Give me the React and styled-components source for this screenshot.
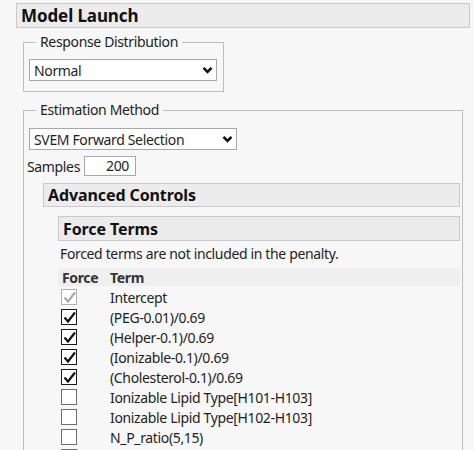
import React from "react";
import styled, { createGlobalStyle } from "styled-components";

const GlobalStyle = createGlobalStyle`
  html, body {
    margin: 0;
    padding: 0;
    background: #f7f7f7;
  }
  body {
    font-family: "Noto Sans", "Open Sans", sans-serif;
    color: #1e1e1e;
    font-size: 14px;
    letter-spacing: -0.35px;
  }
`;

const Page = styled.div`
  padding: 3px 4px 0 16px;
  height: 450px;
  overflow: hidden;
  box-sizing: border-box;
`;

const Outline = styled.div`
  height: ${(p) => p.h}px;
  box-sizing: border-box;
  border: 1px solid #c9c9c9;
  background: #ececec;
  display: flex;
  align-items: center;
  padding-left: 4px;
  font-weight: 700;
  font-size: ${(p) => p.size}px;
  letter-spacing: -0.1px;
  color: #111;
  margin: ${(p) => p.m || "0"};
`;

const Body = styled.div`
  padding-left: 7px;
`;

const Group = styled.fieldset`
  margin: ${(p) => p.m};
  width: ${(p) => p.w}px;
  box-sizing: border-box;
  border: 1px solid #bdbdbd;
  padding: ${(p) => p.pad};
  min-width: 0;
`;

const Legend = styled.legend`
  padding: 0 4px;
  margin-left: 7px;
  font-size: 14px;
  line-height: 18px;
  color: #222;
`;

const Select = styled.div`
  width: ${(p) => p.w}px;
  height: 22px;
  box-sizing: border-box;
  border: 1px solid #a8a8a8;
  background: #fff;
  display: flex;
  align-items: center;
  justify-content: space-between;
  padding: 0 3px 0 4px;
  font-size: 14px;
`;

const Chevron = () => (
  <svg width="11" height="8" viewBox="0 0 11 8">
    <path d="M1.5 1.8 L5.5 5.8 L9.5 1.8" fill="none" stroke="#111" strokeWidth="2.6" />
  </svg>
);

const SampleRow = styled.div`
  display: flex;
  align-items: center;
  gap: 4px;
  margin: 6px 0 0 -2px;
`;

const NumInput = styled.div`
  width: 52px;
  height: 20px;
  box-sizing: border-box;
  border: 1px solid #a8a8a8;
  background: #fff;
  text-align: right;
  padding-right: 6px;
  line-height: 18px;
`;

const Indent = styled.div`
  padding-left: ${(p) => p.l}px;
`;

const Note = styled.div`
  padding: 3px 0 0 2px;
  line-height: 20px;
`;

const Table = styled.div`
  margin-top: 4px;
`;

const HeadRow = styled.div`
  display: flex;
  height: 18px;
  align-items: center;
  background: #efefef;
  font-weight: 700;
  font-size: 14px;
  color: #333;
  margin-bottom: 1px;
`;

const Row = styled.div`
  display: flex;
  height: 20px;
  align-items: center;
`;

const ForceCell = styled.div`
  width: 52px;
  padding-left: ${(p) => (p.head ? 4 : 3)}px;
  box-sizing: border-box;
`;

const Box = styled.div`
  width: 16px;
  height: 16px;
  box-sizing: border-box;
  border: 1.6px solid ${(p) => (p.disabled ? "#b0b0b0" : p.checked ? "#1a1a1a" : "#6e6e6e")};
  background: #fff;
  display: flex;
  align-items: center;
  justify-content: center;
`;

const Check = ({ color }) => (
  <svg width="13" height="13" viewBox="0 0 13 13">
    <path d="M1.5 6.5 L5 10.5 L12 1.5" fill="none" stroke={color} strokeWidth="2.2" />
  </svg>
);

const terms = [
  { name: "Intercept", checked: true, disabled: true },
  { name: "(PEG-0.01)/0.69", checked: true },
  { name: "(Helper-0.1)/0.69", checked: true },
  { name: "(Ionizable-0.1)/0.69", checked: true },
  { name: "(Cholesterol-0.1)/0.69", checked: true },
  { name: "Ionizable Lipid Type[H101-H103]" },
  { name: "Ionizable Lipid Type[H102-H103]" },
  { name: "N_P_ratio(5,15)" },
  { name: "" },
];

export default function App() {
  return (
    <>
      <GlobalStyle />
      <Page>
        <Outline h={25} size={17}>Model Launch</Outline>
        <Body>
          <Group m="5px 0 0 0" w={201} pad="8px 6px 10px 5px">
            <Legend>Response Distribution</Legend>
            <Select w={188}>
              Normal
              <Chevron />
            </Select>
          </Group>
          <Group m="9px 0 0 0" w={440} pad="9px 2px 20px 5px">
            <Legend>Estimation Method</Legend>
            <Select w={208}>
              SVEM Forward Selection
              <Chevron />
            </Select>
            <SampleRow>
              Samples
              <NumInput>200</NumInput>
            </SampleRow>
            <Indent l={14}>
              <Outline h={24} size={16} m="7px 0 0 0">Advanced Controls</Outline>
              <Indent l={15}>
                <Outline h={25} size={16} m="9px 0 0 0">Force Terms</Outline>
                <Note>Forced terms are not included in the penalty.</Note>
                <Table>
                  <HeadRow>
                    <ForceCell head>Force</ForceCell>
                    <span>Term</span>
                  </HeadRow>
                  {terms.map((t, i) => (
                    <Row key={i}>
                      <ForceCell>
                        <Box checked={t.checked} disabled={t.disabled}>
                          {t.checked && <Check color={t.disabled ? "#a8a8a8" : "#111"} />}
                        </Box>
                      </ForceCell>
                      <span>{t.name}</span>
                    </Row>
                  ))}
                </Table>
              </Indent>
            </Indent>
          </Group>
        </Body>
      </Page>
    </>
  );
}
